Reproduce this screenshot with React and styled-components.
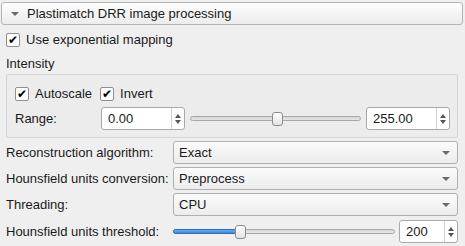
import React from 'react';
import styled, { createGlobalStyle } from 'styled-components';

const GlobalStyle = createGlobalStyle`
  html, body {
    margin: 0;
    padding: 0;
    background: #efefef;
  }
  body {
    font-family: 'Liberation Sans', Arial, sans-serif;
    font-size: 13px;
    color: #1a1a1a;
  }
`;

const Page = styled.div`
  width: 465px;
  height: 246px;
  overflow: hidden;
  background: #efefef;
`;

const Header = styled.div`
  display: flex;
  align-items: center;
  height: 21px;
  margin: 2px 2px 0 1px;
  padding-left: 9px;
  border: 1px solid #b4b4b4;
  border-radius: 3px;
  background: linear-gradient(#fdfdfd, #ececec);
  gap: 8px;
`;

const Caret = styled.span`
  width: 0;
  height: 0;
  border-left: 4px solid transparent;
  border-right: 4px solid transparent;
  border-top: 4px solid #6a6a6a;
`;

const Body = styled.div`
  padding: 0 7px 0 6px;
  display: flex;
  flex-direction: column;
`;

const CheckLabel = styled.label`
  display: inline-flex;
  align-items: center;
  gap: 6px;
  height: 15px;
  line-height: 15px;
  margin-right: ${(p) => p.$gap || 0}px;
`;

const Box = styled.span`
  width: 12px;
  height: 12px;
  border: 1px solid #8f8f8f;
  border-radius: 2px;
  background: #fff;
  display: inline-flex;
  align-items: center;
  justify-content: center;
  font-size: 12px;
  line-height: 1;
  color: #000;
  font-family: 'DejaVu Sans', sans-serif;
`;

const TopCheck = styled.div`
  margin-top: 7px;
  display: flex;
`;

const SectionTitle = styled.div`
  margin-top: 9px;
  height: 15px;
  line-height: 15px;
`;

const Group = styled.div`
  margin-top: 3px;
  border: 1px solid #d6d6d6;
  border-radius: 2px;
  background: #ececec;
  padding: 11px 7px 7px 8px;
  display: flex;
  flex-direction: column;
`;

const CheckRow = styled.div`
  display: flex;
  align-items: center;
`;

const RangeRow = styled.div`
  margin-top: 6px;
  display: flex;
  align-items: center;
  height: 23px;
`;

const RangeLabel = styled.span`
  width: 86px;
`;

const SpinWrap = styled.div`
  display: flex;
  width: ${(p) => p.$w}px;
  height: 21px;
  border: 1px solid #a9a9a9;
  border-radius: 3px;
  background: #fff;
  box-sizing: content-box;
  flex-shrink: 0;
`;

const SpinText = styled.span`
  flex: 1;
  padding-left: 6px;
  line-height: 21px;
`;

const SpinBtns = styled.span`
  width: 12px;
  border-left: 1px solid #d2d2d2;
  display: flex;
  flex-direction: column;
  align-items: center;
  justify-content: center;
  gap: 2px;
`;

const ArrowUp = styled.span`
  width: 0;
  height: 0;
  border-left: 3.5px solid transparent;
  border-right: 3.5px solid transparent;
  border-bottom: 4px solid #555;
`;

const ArrowDown = styled.span`
  width: 0;
  height: 0;
  border-left: 3.5px solid transparent;
  border-right: 3.5px solid transparent;
  border-top: 4px solid #555;
`;

const Slider = styled.div`
  position: relative;
  flex: 1;
  height: 13px;
  margin: 0 ${(p) => p.$mr}px 0 ${(p) => p.$ml}px;
`;

const Groove = styled.div`
  position: absolute;
  left: 0;
  right: 0;
  top: 4px;
  height: 3px;
  border: 1px solid #a8a8a8;
  border-radius: 3px;
  background: linear-gradient(#d6d6d6, #e6e6e6);
`;

const Fill = styled.div`
  position: absolute;
  left: 0;
  top: 4px;
  height: 3px;
  border: 1px solid #2a6fb8;
  border-radius: 3px;
  background: linear-gradient(#68aef0, #3688dd);
`;

const Handle = styled.div`
  position: absolute;
  top: 0;
  width: 9px;
  height: 12px;
  border: 1px solid #8c8c8c;
  border-radius: 3px;
  background: linear-gradient(#ffffff, #e4e4e4);
`;

const Form = styled.div`
  margin-top: 3px;
  display: grid;
  grid-template-columns: 167px 1fr;
  row-gap: 3px;
  align-items: center;
`;

const Combo = styled.div`
  height: 21px;
  border: 1px solid #b0b0b0;
  border-radius: 3px;
  background: linear-gradient(#fbfbfb, #ececec);
  display: flex;
  align-items: center;
  justify-content: space-between;
  padding: 0 7px 0 5px;
`;

const ThresholdRow = styled.div`
  display: flex;
  align-items: center;
  height: 23px;
  margin-top: 1px;
`;

function SpinBox({ value, w }) {
  return (
    <SpinWrap $w={w}>
      <SpinText>{value}</SpinText>
      <SpinBtns>
        <ArrowUp />
        <ArrowDown />
      </SpinBtns>
    </SpinWrap>
  );
}

function Check({ children, gap }) {
  return (
    <CheckLabel $gap={gap}>
      <Box>✔</Box>
      {children}
    </CheckLabel>
  );
}

export default function App() {
  return (
    <Page>
      <GlobalStyle />
      <Header>
        <Caret />
        Plastimatch DRR image processing
      </Header>
      <Body>
        <TopCheck>
          <Check>Use exponential mapping</Check>
        </TopCheck>
        <SectionTitle>Intensity</SectionTitle>
        <Group>
          <CheckRow>
            <Check gap={8}>Autoscale</Check>
            <Check>Invert</Check>
          </CheckRow>
          <RangeRow>
            <RangeLabel>Range:</RangeLabel>
            <SpinBox value="0.00" w={82} />
            <Slider $ml={5} $mr={5}>
              <Groove />
              <Handle style={{ left: '82px' }} />
            </Slider>
            <SpinBox value="255.00" w={82} />
          </RangeRow>
        </Group>
        <Form>
          <span>Reconstruction algorithm:</span>
          <Combo>
            Exact
            <Caret />
          </Combo>
          <span>Hounsfield units conversion:</span>
          <Combo>
            Preprocess
            <Caret />
          </Combo>
          <span>Threading:</span>
          <Combo>
            CPU
            <Caret />
          </Combo>
          <span>Hounsfield units threshold:</span>
          <ThresholdRow>
            <Slider $ml={0} $mr={4}>
              <Groove />
              <Fill style={{ width: '62px' }} />
              <Handle style={{ left: '62px' }} />
            </Slider>
            <SpinBox value="200" w={57} />
          </ThresholdRow>
        </Form>
      </Body>
    </Page>
  );
}
